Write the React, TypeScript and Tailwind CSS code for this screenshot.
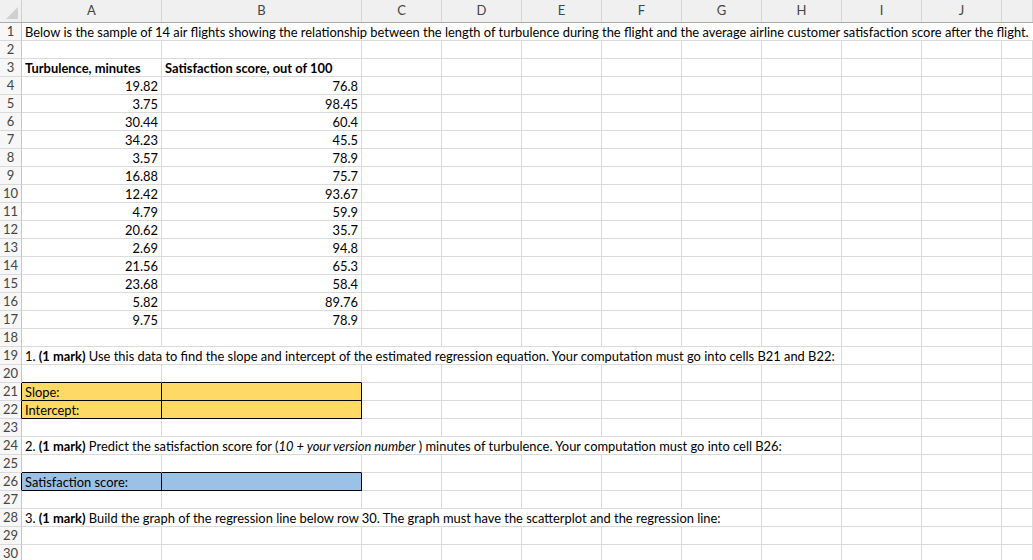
import React from 'react';

const GRID = 'grid grid-cols-[22px_140px_200px_repeat(8,80px)_1fr]';
const LETTERS = ['A', 'B', 'C', 'D', 'E', 'F', 'G', 'H', 'I', 'J', ''];

const turbulence = ['19.82', '3.75', '30.44', '34.23', '3.57', '16.88', '12.42', '4.79', '20.62', '2.69', '21.56', '23.68', '5.82', '9.75'];
const scores = ['76.8', '98.45', '60.4', '45.5', '78.9', '75.7', '93.67', '59.9', '35.7', '94.8', '65.3', '58.4', '89.76', '78.9'];

function Cell({ children, className = '' }: { children?: React.ReactNode; className?: string }) {
  return (
    <div className={`h-[18px] border-b border-r border-[#dadada] flex items-end px-[3px] pb-[1px] leading-[14px] whitespace-nowrap overflow-visible ${className}`}>
      {children}
    </div>
  );
}

function Row({ n, children, dark = false }: { n: number; children: React.ReactNode; dark?: boolean }) {
  return (
    <div className={GRID}>
      <div className={`h-[18px] border-b border-r border-b-[#dadada] flex items-center justify-center text-[13px] text-[#444] bg-[#f7f7f7] ${dark ? 'border-r-black' : 'border-r-[#c6c6c6]'}`}>
        {n}
      </div>
      {children}
    </div>
  );
}

function Blank({ count }: { count: number }) {
  return (
    <>
      {Array.from({ length: count }).map((_, i) => (
        <Cell key={i} />
      ))}
    </>
  );
}

export default function App() {
  return (
    <div className="w-[1033px] h-[560px] overflow-hidden bg-white text-black text-[12.9px] font-['Lato','Liberation_Sans',sans-serif]">
      {/* Column headers */}
      <div className={`${GRID} h-[23px] bg-[#f0f0f0] border-b border-[#ababab]`}>
        <div className="relative border-r border-[#d0d0d0]">
          <svg className="absolute right-[3px] bottom-[3px]" width="12" height="12" viewBox="0 0 12 12">
            <polygon points="12,0 12,12 0,12" fill="#d0d0d0" />
          </svg>
        </div>
        {LETTERS.map((l, i) => (
          <div key={i} className="border-r border-[#d6d6d6] flex items-center justify-center text-[13px] text-[#444]">
            {l}
          </div>
        ))}
      </div>

      <Row n={1}>
        <Cell className="col-span-11 border-r-0">
          Below is the sample of 14 air flights showing the relationship between the length of turbulence during the flight and the average airline customer satisfaction score after the flight.
        </Cell>
      </Row>
      <Row n={2}><Blank count={11} /></Row>
      <Row n={3}>
        <Cell className="font-bold">Turbulence, minutes</Cell>
        <Cell className="font-bold">Satisfaction score, out of 100</Cell>
        <Blank count={9} />
      </Row>
      {turbulence.map((t, i) => (
        <Row key={i} n={i + 4}>
          <Cell className="justify-end">{t}</Cell>
          <Cell className="justify-end">{scores[i]}</Cell>
          <Blank count={9} />
        </Row>
      ))}
      <Row n={18}><Blank count={11} /></Row>
      <Row n={19}>
        <Cell className="col-span-8">
          1.&nbsp;<b>(1 mark)</b>&nbsp;Use this data to find the slope and intercept of the estimated regression equation. Your computation must go into cells B21 and B22:
        </Cell>
        <Blank count={3} />
      </Row>
      <Row n={20}>
        <Cell className="border-b-black" />
        <Cell className="border-b-black" />
        <Blank count={9} />
      </Row>
      <Row n={21} dark>
        <Cell className="bg-[#ffd966] border-black">Slope:</Cell>
        <Cell className="bg-[#ffd966] border-black" />
        <Blank count={9} />
      </Row>
      <Row n={22} dark>
        <Cell className="bg-[#ffd966] border-black">Intercept:</Cell>
        <Cell className="bg-[#ffd966] border-black" />
        <Blank count={9} />
      </Row>
      <Row n={23}><Blank count={11} /></Row>
      <Row n={24}>
        <Cell className="col-span-8">
          2.&nbsp;<b>(1 mark)</b>&nbsp;Predict the satisfaction score for (<i>10 + your version number</i>&nbsp;) minutes of turbulence. Your computation must go into cell B26:
        </Cell>
        <Blank count={3} />
      </Row>
      <Row n={25}>
        <Cell className="border-b-black" />
        <Cell className="border-b-black" />
        <Blank count={9} />
      </Row>
      <Row n={26} dark>
        <Cell className="bg-[#9bc2e6] border-black">Satisfaction score:</Cell>
        <Cell className="bg-[#9bc2e6] border-black" />
        <Blank count={9} />
      </Row>
      <Row n={27}><Blank count={11} /></Row>
      <Row n={28}>
        <Cell className="col-span-7">
          3.&nbsp;<b>(1 mark)</b>&nbsp;Build the graph of the regression line below row 30. The graph must have the scatterplot and the regression line:
        </Cell>
        <Blank count={4} />
      </Row>
      <Row n={29}><Blank count={11} /></Row>
      <Row n={30}><Blank count={11} /></Row>
    </div>
  );
}
